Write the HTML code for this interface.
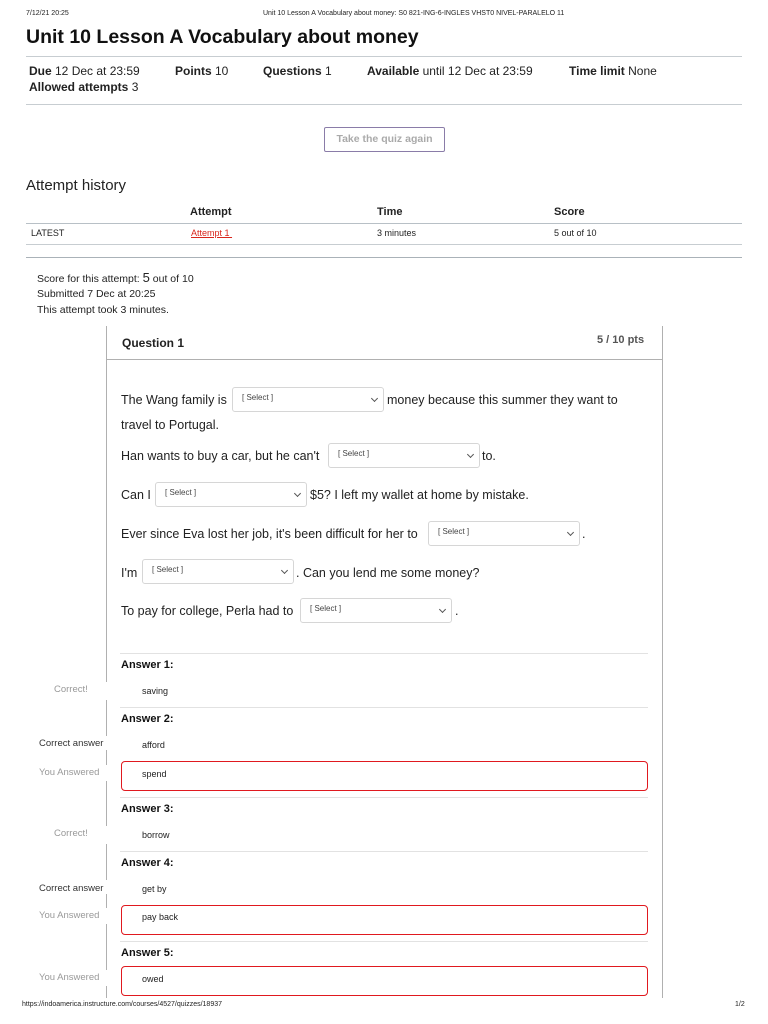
<!DOCTYPE html>
<html><head><meta charset="utf-8"><style>
*{margin:0;padding:0;box-sizing:border-box}
body{width:768px;height:1024px;background:#fff;position:relative;overflow:hidden;font-family:"Liberation Sans",sans-serif;color:#222}
.a{position:absolute;white-space:nowrap}
.hl{position:absolute;height:1px;background:#c7cdd1}
.b{font-weight:bold}
.sel{position:absolute;height:25px;border:1px solid #d6d6d6;border-radius:3px;background:#fff;font-size:8px;color:#444;padding:5px 0 0 9px}
.sel:after{content:"";position:absolute;right:6px;top:8px;width:4px;height:4px;border-right:1px solid #555;border-bottom:1px solid #555;transform:rotate(45deg)}
.q{font-size:12.5px;color:#222}
.ans{font-size:11px;font-weight:bold;color:#111}
.val{font-size:9px;color:#222;left:142px}
.red{position:absolute;left:121px;width:527px;height:30px;border:1.5px solid #e0191f;border-radius:4px}
.lab{font-size:9.5px;color:#999;left:39px}
.gap{position:absolute;left:104px;width:5px;background:#fff}
</style></head><body>
<div class="a" style="left:26px;top:10px;font-size:7px">7/12/21 20:25</div>
<div class="a" style="left:263px;top:10px;font-size:7px">Unit 10 Lesson A Vocabulary about money: S0 821-ING-6-INGLES VHST0 NIVEL-PARALELO 11</div>
<div class="a b" style="left:26px;top:26px;font-size:19.5px;color:#111">Unit 10 Lesson A Vocabulary about money</div>
<div class="hl" style="left:26px;top:56px;width:716px"></div>
<div class="a" style="left:29px;top:64px;font-size:12px"><b>Due</b> 12 Dec at 23:59</div>
<div class="a" style="left:175px;top:64px;font-size:12px"><b>Points</b> 10</div>
<div class="a" style="left:263px;top:64px;font-size:12px"><b>Questions</b> 1</div>
<div class="a" style="left:367px;top:64px;font-size:12px"><b>Available</b> until 12 Dec at 23:59</div>
<div class="a" style="left:569px;top:64px;font-size:12px"><b>Time limit</b> None</div>
<div class="a" style="left:29px;top:80px;font-size:12px"><b>Allowed attempts</b> 3</div>
<div class="hl" style="left:26px;top:104px;width:716px"></div>
<div class="a" style="left:324px;top:127px;width:121px;height:25px;border:1.5px solid #8a7ca8;border-radius:2px;font-size:10.5px;font-weight:bold;color:#aaa;text-align:center;padding-top:5px">Take the quiz again</div>
<div class="a" style="left:26px;top:177px;font-size:15px;color:#222">Attempt history</div>
<div class="a b" style="left:190px;top:206px;font-size:11px">Attempt</div>
<div class="a b" style="left:377px;top:206px;font-size:11px">Time</div>
<div class="a b" style="left:554px;top:206px;font-size:11px">Score</div>
<div class="hl" style="left:26px;top:223px;width:716px;background:#b8c0c6"></div>
<div class="a" style="left:31px;top:228px;font-size:9px">LATEST</div>
<div class="a" style="left:191px;top:228px;font-size:9px;color:#d9261c;text-decoration:underline">Attempt 1&nbsp;</div>
<div class="a" style="left:377px;top:228px;font-size:9px">3 minutes</div>
<div class="a" style="left:554px;top:228px;font-size:9px">5 out of 10</div>
<div class="hl" style="left:26px;top:244px;width:716px"></div>
<div class="hl" style="left:26px;top:257px;width:716px;background:#aab2b8"></div>
<div class="a" style="left:37px;top:270px;font-size:10.5px">Score for this attempt: <span style="font-size:13px">5</span> out of 10</div>
<div class="a" style="left:37px;top:288px;font-size:10.5px">Submitted 7 Dec at 20:25</div>
<div class="a" style="left:37px;top:304px;font-size:10.5px">This attempt took 3 minutes.</div>

<div class="a" style="left:106px;top:326px;width:557px;height:672px;border-left:1px solid #b0b0b0;border-right:1px solid #b0b0b0"></div>
<div class="hl" style="left:106px;top:359px;width:557px;background:#b0b0b0"></div>
<div class="a b" style="left:122px;top:336px;font-size:12px;color:#222">Question 1</div>
<div class="a b" style="left:597px;top:334px;font-size:11px;color:#555">5 / 10 pts</div>

<div class="a q" style="left:121px;top:393px">The Wang family is</div>
<div class="sel" style="left:232px;top:387px;width:152px">[ Select ]</div>
<div class="a q" style="left:387px;top:393px">money because this summer they want to</div>
<div class="a q" style="left:121px;top:418px">travel to Portugal.</div>
<div class="a q" style="left:121px;top:449px">Han wants to buy a car, but he can't</div>
<div class="sel" style="left:328px;top:443px;width:152px">[ Select ]</div>
<div class="a q" style="left:482px;top:449px">to.</div>
<div class="a q" style="left:121px;top:488px">Can I</div>
<div class="sel" style="left:155px;top:482px;width:152px">[ Select ]</div>
<div class="a q" style="left:310px;top:488px">$5? I left my wallet at home by mistake.</div>
<div class="a q" style="left:121px;top:527px">Ever since Eva lost her job, it's been difficult for her to</div>
<div class="sel" style="left:428px;top:521px;width:152px">[ Select ]</div>
<div class="a q" style="left:582px;top:527px">.</div>
<div class="a q" style="left:121px;top:566px">I'm</div>
<div class="sel" style="left:142px;top:559px;width:152px">[ Select ]</div>
<div class="a q" style="left:296px;top:566px">. Can you lend me some money?</div>
<div class="a q" style="left:121px;top:604px">To pay for college, Perla had to</div>
<div class="sel" style="left:300px;top:598px;width:152px">[ Select ]</div>
<div class="a q" style="left:455px;top:604px">.</div>

<div class="hl" style="left:120px;top:653px;width:528px;background:#e2e2e2"></div>
<div class="a ans" style="left:121px;top:659px">Answer 1:</div>
<div class="gap" style="top:682px;height:18px"></div>
<div class="a lab" style="left:54px;top:684px">Correct!</div>
<div class="a val" style="top:686px">saving</div>
<div class="hl" style="left:120px;top:707px;width:528px;background:#e2e2e2"></div>
<div class="a ans" style="left:121px;top:713px">Answer 2:</div>
<div class="gap" style="top:736px;height:14px"></div>
<div class="a" style="left:39px;top:738px;font-size:9.5px;color:#333">Correct answer</div>
<div class="a val" style="top:740px">afford</div>
<div class="gap" style="top:765px;height:16px"></div>
<div class="a lab" style="top:767px">You Answered</div>
<div class="red" style="top:761px"></div>
<div class="a val" style="top:769px">spend</div>
<div class="hl" style="left:120px;top:797px;width:528px;background:#e2e2e2"></div>
<div class="a ans" style="left:121px;top:803px">Answer 3:</div>
<div class="gap" style="top:826px;height:18px"></div>
<div class="a lab" style="left:54px;top:828px">Correct!</div>
<div class="a val" style="top:830px">borrow</div>
<div class="hl" style="left:120px;top:851px;width:528px;background:#e2e2e2"></div>
<div class="a ans" style="left:121px;top:857px">Answer 4:</div>
<div class="gap" style="top:880px;height:14px"></div>
<div class="a" style="left:39px;top:883px;font-size:9.5px;color:#333">Correct answer</div>
<div class="a val" style="top:884px">get by</div>
<div class="gap" style="top:908px;height:16px"></div>
<div class="a lab" style="top:910px">You Answered</div>
<div class="red" style="top:905px"></div>
<div class="a val" style="top:912px">pay back</div>
<div class="hl" style="left:120px;top:941px;width:528px;background:#e2e2e2"></div>
<div class="a ans" style="left:121px;top:947px">Answer 5:</div>
<div class="gap" style="top:970px;height:16px"></div>
<div class="a lab" style="top:972px">You Answered</div>
<div class="red" style="top:966px"></div>
<div class="a val" style="top:974px">owed</div>

<div class="a" style="left:22px;top:1001px;font-size:7px">https://indoamerica.instructure.com/courses/4527/quizzes/18937</div>
<div class="a" style="left:735px;top:1001px;font-size:7px">1/2</div>
</body></html>
